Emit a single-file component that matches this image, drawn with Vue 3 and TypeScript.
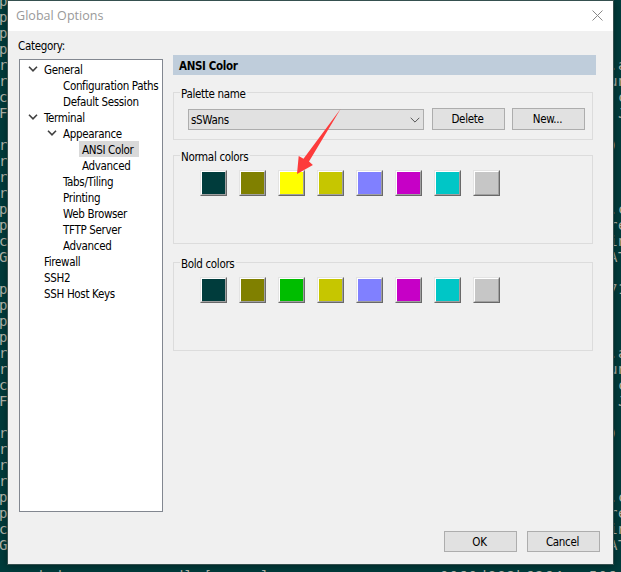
<script setup lang="ts">
interface TreeItem {
  label: string
  level: number
  open?: boolean
  selected?: boolean
}

const tree: TreeItem[] = [
  { label: 'General', level: 0, open: true },
  { label: 'Configuration Paths', level: 1 },
  { label: 'Default Session', level: 1 },
  { label: 'Terminal', level: 0, open: true },
  { label: 'Appearance', level: 1, open: true },
  { label: 'ANSI Color', level: 2, selected: true },
  { label: 'Advanced', level: 2 },
  { label: 'Tabs/Tiling', level: 1 },
  { label: 'Printing', level: 1 },
  { label: 'Web Browser', level: 1 },
  { label: 'TFTP Server', level: 1 },
  { label: 'Advanced', level: 1 },
  { label: 'Firewall', level: 0 },
  { label: 'SSH2', level: 0 },
  { label: 'SSH Host Keys', level: 0 },
]

const normal = ['#003c3c', '#808000', '#ffff00', '#c6c600', '#8080ff', '#c600c6', '#00c6c6', '#c6c6c6']
const bold = ['#003c3c', '#808000', '#00bd00', '#c6c600', '#8080ff', '#c600c6', '#00c6c6', '#c6c6c6']
const groups = [
  { title: 'Normal colors', colors: normal },
  { title: 'Bold colors', colors: bold },
]

// First and last visible columns of the terminal behind the dialog
const leftColumn = [...'pppprrcF rrrrppcG pppprrcF rrrrppcG ']
const rightColumn = [
  '', '', '', '', '.a', 'un', ' c', ' J', '', ')', '', '', '', '.c', 're', 'in', 'AT', '',
  '71', '', '', '', '.a', 'un', ' c', ' J', '', ')', '', '', '', '.c', 're', 'in', 'AT', '',
]
</script>

<template>
  <div class="screen">
    <div class="term top">/etc/ipsec.d/certs/strongswan : issuer "CN=strongSwan CA"</div>
    <div class="term col left">
      <div v-for="(c, i) in leftColumn" :key="i">{{ c }}</div>
    </div>
    <div class="term col right">
      <div v-for="(c, i) in rightColumn" :key="i">{{ c }}</div>
    </div>
    <div class="term bottom"><span>b b</span><span>dl [</span><span>l</span><span>0060d882b6264</span><span>506</span></div>

    <div class="dialog">
      <header class="titlebar">
        <span class="title">Global Options</span>
        <svg class="close" width="11" height="11" viewBox="0 0 11 11"><path d="M.5.5l10 10M10.5.5l-10 10" /></svg>
      </header>
      <div class="category">Category:</div>
      <main class="body">
        <nav class="tree">
          <div v-for="(t, i) in tree" :key="i" class="row" :class="'level' + t.level">
            <span class="twist">
              <svg v-if="t.open" width="10" height="6" viewBox="0 0 10 6"><path d="M1 .8l4 4 4-4" /></svg>
            </span>
            <span class="label" :class="{ selected: t.selected }">{{ t.label }}</span>
          </div>
        </nav>
        <section class="pane">
          <h1 class="heading">ANSI Color</h1>
          <div class="group palette">
            <span class="legend">Palette name</span>
            <div class="controls">
              <div class="combo">
                <span>sSWans</span>
                <svg width="10" height="6" viewBox="0 0 10 6"><path d="M.7.8L5 5.1 9.3.8" /></svg>
              </div>
              <button class="btn">Delete</button>
              <button class="btn">New...</button>
            </div>
          </div>
          <div v-for="g in groups" :key="g.title" class="group colors">
            <span class="legend">{{ g.title }}</span>
            <div class="swatches">
              <div v-for="(c, i) in g.colors" :key="i" class="swatch"><i :style="{ background: c }"></i></div>
            </div>
          </div>
        </section>
      </main>
      <footer class="footer">
        <button class="btn">OK</button>
        <button class="btn">Cancel</button>
      </footer>
    </div>

    <svg class="arrow" width="46" height="68" viewBox="296 108 46 68">
      <path d="M297 174l1.7-18 4.8 2.8L340.7 108.7 309 161.5l3.9 3.5z" />
    </svg>
  </div>
</template>

<style>
body {
  margin: 0;
}
</style>

<style scoped>
* {
  box-sizing: border-box;
}
.screen {
  position: relative;
  width: 621px;
  height: 572px;
  overflow: hidden;
  background: #003c3c;
  font-family: 'DejaVu Sans Condensed', 'DejaVu Sans', sans-serif;
  font-stretch: condensed;
  font-size: 11.5px;
  letter-spacing: -0.33px;
  color: #000;
}
.term {
  position: absolute;
  font: 14px/16px 'DejaVu Sans Mono', monospace;
  letter-spacing: 0.5px;
  color: #b3b6ab;
  white-space: pre;
}
.term.col div {
  height: 16px;
}
.top {
  left: 36px;
  top: -10px;
}
.left {
  left: -1px;
  top: -7px;
}
.right {
  left: 609px;
  top: -7px;
}
.bottom {
  left: 39px;
  top: 568px;
  display: grid;
  grid-template-columns: 136px 86px 179px 149px 60px;
  letter-spacing: 1.1px;
}
.dialog {
  position: absolute;
  left: 7px;
  top: 0;
  width: 607px;
  height: 565px;
  border: 1px solid #35504f;
  background: #f0f0f0;
  box-shadow: 0 1px 8px rgba(0, 0, 0, 0.4);
  display: flex;
  flex-direction: column;
}
.titlebar {
  height: 30px;
  flex: none;
  background: #fff;
  display: flex;
  justify-content: space-between;
  align-items: center;
  padding: 0 10px 2px 8px;
}
.title {
  font: 12.5px 'Open Sans', 'Noto Sans', sans-serif;
  letter-spacing: 0.05px;
  color: #999;
}
.close path {
  stroke: #888;
  fill: none;
}
.category {
  height: 28px;
  padding: 8px 0 0 10px;
  line-height: 15px;
}
.body {
  display: flex;
  gap: 10px;
  padding-left: 11px;
}
.tree {
  width: 144px;
  height: 453px;
  flex: none;
  background: #fff;
  border: 1px solid #828790;
  padding-top: 1px;
}
.row {
  height: 16px;
  display: flex;
  align-items: center;
  white-space: nowrap;
}
.level0 {
  padding-left: 5px;
}
.level1 {
  padding-left: 24px;
}
.level2 {
  padding-left: 43px;
}
.twist {
  width: 16px;
  display: flex;
  padding-left: 3px;
}
.twist path {
  fill: none;
  stroke: #404040;
  stroke-width: 1.6;
}
.label {
  height: 16px;
  padding: 1px 3px 0;
  line-height: 16px;
}
.selected {
  background: #d9d9d9;
  width: 60px;
}
.pane {
  width: 423px;
  margin-top: -4px;
}
.heading {
  margin: 0 0 17px;
  height: 20px;
  background: #bfcddb;
  padding: 1px 0 0 6px;
  font-size: 11.5px;
  line-height: 20px;
  letter-spacing: -0.35px;
}
.group {
  position: relative;
  width: 420px;
  border: 1px solid #dcdcdc;
}
.palette {
  height: 48px;
  margin-bottom: 15px;
}
.colors {
  height: 89px;
  margin-bottom: 18px;
}
.legend {
  position: absolute;
  left: 6px;
  top: -7px;
  padding: 0 2px 0 1px;
  line-height: 16px;
  background: #f0f0f0;
}
.controls {
  display: flex;
  align-items: flex-end;
  padding: 15px 0 0 14px;
}
.combo {
  width: 236px;
  height: 21px;
  margin-right: 8px;
  border: 1px solid #adadad;
  background: #e1e1e1;
  display: flex;
  align-items: center;
  justify-content: space-between;
  padding: 1px 3px 0 2px;
}
.combo path {
  fill: none;
  stroke: #555;
}
.btn {
  width: 73px;
  height: 22px;
  padding: 0 2px 0 0;
  border: 1px solid #adadad;
  background: #e1e1e1;
  font: inherit;
  letter-spacing: inherit;
  color: inherit;
}
.controls .btn + .btn {
  margin-left: 7px;
}
.swatches {
  display: flex;
  gap: 12px;
  padding: 14px 0 0 26px;
}
.swatch {
  width: 27px;
  height: 26px;
  border: 1px solid;
  border-color: #e3e3e3 #696969 #696969 #e3e3e3;
}
.swatch i {
  display: block;
  height: 24px;
  border: 1px solid;
  border-color: #fff #a0a0a0 #a0a0a0 #fff;
}
.footer {
  display: flex;
  gap: 10px;
  padding: 19px 0 0 436px;
}
.footer .btn {
  height: 21px;
  padding-top: 1px;
}
.arrow {
  position: absolute;
  left: 296px;
  top: 108px;
}
.arrow path {
  fill: #fd3b3b;
}
</style>
